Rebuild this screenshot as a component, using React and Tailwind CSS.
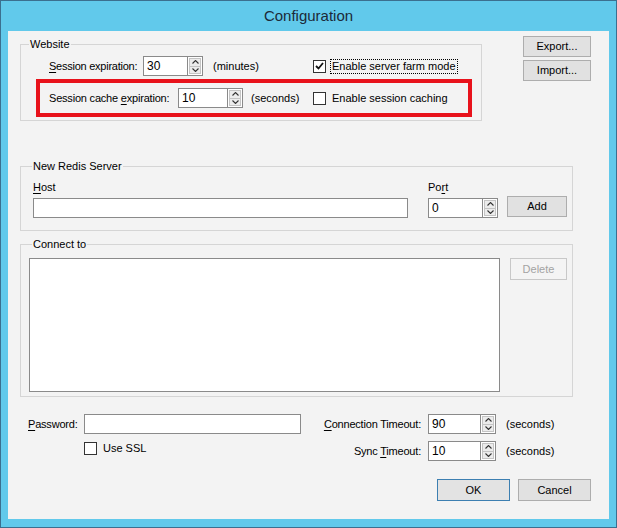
import React from "react";

const font = { fontFamily: '"Liberation Sans", Arial, sans-serif' };

const Chevron = ({ up }) => (
  <svg width="7" height="4" viewBox="0 0 7 4" className="block">
    <path
      d={up ? "M0.5 3.5 L3.5 0.5 L6.5 3.5" : "M0.5 0.5 L3.5 3.5 L6.5 0.5"}
      fill="none"
      stroke="#333"
      strokeWidth="1.1"
    />
  </svg>
);

const Spin = ({ value, boxClass }) => (
  <div className="flex h-[20px]">
    <div
      className={`flex items-center border border-[#8a8a8a] border-r-0 bg-white pl-[3px] text-[12px] ${boxClass}`}
    >
      {value}
    </div>
    <div className="flex w-[16px] flex-col border border-[#8a8a8a] bg-white p-[1px]">
      <div className="flex flex-1 items-center justify-center border border-[#c4c4c4] bg-[#ececec]">
        <Chevron up />
      </div>
      <div className="flex flex-1 items-center justify-center border border-t-0 border-[#c4c4c4] bg-[#ececec]">
        <Chevron />
      </div>
    </div>
  </div>
);

const CheckBox = ({ checked }) => (
  <div className="flex h-[13px] w-[13px] items-center justify-center border border-[#333] bg-white">
    {checked && (
      <svg width="9" height="8" viewBox="0 0 9 8">
        <path d="M1 4 L3.5 6.5 L8 1" fill="none" stroke="#111" strokeWidth="1.8" />
      </svg>
    )}
  </div>
);

const Button = ({ children, className = "", disabled, isDefault }) => (
  <button
    className={`flex items-center justify-center border text-[11px] ${
      disabled
        ? "border-[#c8c8c8] bg-[#f4f4f4] text-[#a3a3a3]"
        : isDefault
        ? "border-[#3c7fb1] bg-[#e3e3e3] text-black"
        : "border-[#adadad] bg-[#e1e1e1] text-black"
    } ${className}`}
  >
    {children}
  </button>
);

const Group = ({ title, legendClass, className = "", children }) => (
  <fieldset className={`border border-[#d5d5d5] ${className}`}>
    <legend className={`px-[1px] text-[11px] leading-[13px] ${legendClass}`}>{title}</legend>
    {children}
  </fieldset>
);

export default function App() {
  return (
    <div
      className="flex h-[528px] w-[617px] flex-col border border-[#3b6f8f] bg-[#61c9eb] text-black"
      style={font}
    >
      <div className="flex h-[30px] items-center justify-center text-[15px] text-[#1c2a38]">
        Configuration
      </div>

      <div className="ml-[7px] flex h-[488px] w-[601px] flex-col bg-[#f3f3f3] pl-[12px] text-[11px] leading-[13px]">
        {/* top row */}
        <div className="flex items-start">
          <Group title="Website" legendClass="ml-[8px]" className="mt-[7px] w-[462px] pb-[3px]">
            <div className="mt-[5px] flex h-[20px] items-center pl-[28px]">
              <span className="w-[94px] tracking-[-0.25px]">
                <u className="underline-offset-2">S</u>ession expiration:
              </span>
              <Spin value="30" boxClass="w-[44px]" />
              <span className="ml-[10px] w-[100px]">(minutes)</span>
              <CheckBox checked />
              <span className="ml-[4px] border border-dotted border-black px-[1px] leading-[13px]">
                Enable server farm mode
              </span>
            </div>
            <div className="ml-[15px] mt-[3px] flex h-[38px] w-[436px] items-center border-[4px] border-[#e8121b] pl-[9px]">
              <span className="w-[129px] tracking-[-0.2px]">
                Session cache <u className="underline-offset-2">e</u>xpiration:
              </span>
              <Spin value="10" boxClass="w-[49px]" />
              <span className="ml-[8px] w-[62px]">(seconds)</span>
              <CheckBox />
              <span className="ml-[6px]">Enable session caching</span>
            </div>
          </Group>
          <div className="ml-[41px] mt-[5px] flex flex-col gap-[3px]">
            <Button className="h-[21px] w-[68px]">Export...</Button>
            <Button className="h-[21px] w-[68px]">Import...</Button>
          </div>
        </div>

        {/* new redis server */}
        <Group title="New Redis Server" legendClass="ml-[11px]" className="mt-[39px] w-[553px] pb-[12px]">
          <div className="flex items-end pl-[12px]">
            <div className="flex w-[375px] flex-col">
              <span className="mt-[8px] h-[13px]">
                <u className="underline-offset-2">H</u>ost
              </span>
              <div className="mt-[4px] h-[20px] border border-[#8a8a8a] bg-white" />
            </div>
            <div className="ml-[20px] flex w-[70px] flex-col">
              <span className="h-[13px]">
                Po<u className="underline-offset-2">r</u>t
              </span>
              <div className="mt-[4px]">
                <Spin value="0" boxClass="w-[54px]" />
              </div>
            </div>
            <Button className="mb-[1px] ml-[9px] h-[21px] w-[60px]">Add</Button>
          </div>
        </Group>

        {/* connect to */}
        <Group title="Connect to" legendClass="ml-[11px]" className="mt-[7px] w-[553px] pb-[4px]">
          <div className="mt-[7px] flex items-start pl-[8px]">
            <div className="h-[134px] w-[471px] border border-[#8a8a8a] bg-white" />
            <Button disabled className="ml-[10px] h-[22px] w-[57px]">
              Delete
            </Button>
          </div>
        </Group>

        {/* bottom fields */}
        <div className="mt-[17px] flex">
          <div className="flex w-[300px] flex-col">
            <div className="flex h-[20px] items-center">
              <span className="ml-[8px] w-[56px] tracking-[-0.2px]">
                <u className="underline-offset-2">P</u>assword:
              </span>
              <div className="h-[20px] w-[217px] border border-[#8a8a8a] bg-white" />
            </div>
            <div className="ml-[64px] mt-[8px] flex items-center">
              <CheckBox />
              <span className="ml-[6px]">Use SSL</span>
            </div>
          </div>
          <div className="flex flex-col gap-[7px]">
            <div className="flex h-[20px] items-center">
              <span className="w-[101px] text-right tracking-[-0.2px]">
                <u className="underline-offset-2">C</u>onnection Timeout:
              </span>
              <div className="ml-[7px]">
                <Spin value="90" boxClass="w-[52px]" />
              </div>
              <span className="ml-[10px]">(seconds)</span>
            </div>
            <div className="flex h-[20px] items-center">
              <span className="w-[101px] text-right tracking-[-0.2px]">
                Sync <u className="underline-offset-2">T</u>imeout:
              </span>
              <div className="ml-[7px]">
                <Spin value="10" boxClass="w-[52px]" />
              </div>
              <span className="ml-[10px]">(seconds)</span>
            </div>
          </div>
        </div>

        <div className="mt-[18px] flex justify-end gap-[8px] pr-[18px]">
          <Button isDefault className="h-[22px] w-[73px]">
            OK
          </Button>
          <Button className="h-[22px] w-[73px]">Cancel</Button>
        </div>
      </div>
    </div>
  );
}
